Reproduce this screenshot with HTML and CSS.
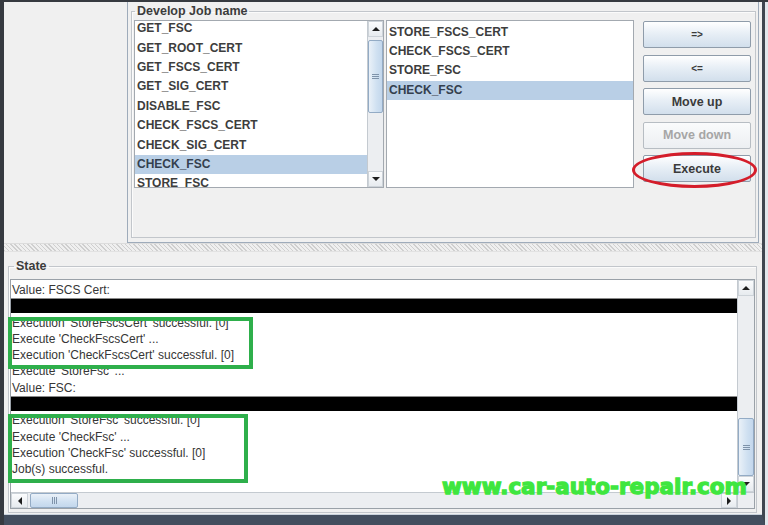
FILE: index.html
```html
<!DOCTYPE html>
<html>
<head>
<meta charset="utf-8">
<link rel="stylesheet" href="styles.css">
</head>
<body>
<div class="win">
  <div class="frame">
    <div class="content">
      <div class="top">
        <div class="jobpanel">
          <fieldset class="group jobgroup">
            <legend>Develop Job name</legend>
            <div class="jobrow">
              <div class="list list-a">
                <div class="list-view">
                  <ul class="items shifted">
                    <li>GET_FSC</li>
                    <li>GET_ROOT_CERT</li>
                    <li>GET_FSCS_CERT</li>
                    <li>GET_SIG_CERT</li>
                    <li>DISABLE_FSC</li>
                    <li>CHECK_FSCS_CERT</li>
                    <li>CHECK_SIG_CERT</li>
                    <li class="sel">CHECK_FSC</li>
                    <li>STORE_FSC</li>
                  </ul>
                </div>
                <div class="vsb">
                  <div class="sb-btn"><span class="tri up"></span></div>
                  <div class="sb-track"><div class="sb-thumb thumb-a"><span class="grip-h"></span></div></div>
                  <div class="sb-btn"><span class="tri down"></span></div>
                </div>
              </div>
              <div class="list list-b">
                <div class="list-view">
                  <ul class="items lowered">
                    <li>STORE_FSCS_CERT</li>
                    <li>CHECK_FSCS_CERT</li>
                    <li>STORE_FSC</li>
                    <li class="sel">CHECK_FSC</li>
                  </ul>
                </div>
              </div>
              <div class="buttons">
                <button class="btn small">=&gt;</button>
                <button class="btn small">&lt;=</button>
                <button class="btn">Move up</button>
                <button class="btn disabled">Move down</button>
                <div class="exec-wrap">
                  <button class="btn exec">Execute</button>
                  <span class="ring"></span>
                </div>
              </div>
            </div>
          </fieldset>
        </div>
      </div>
      <div class="splitter"></div>
      <div class="bottom">
        <fieldset class="group stategroup">
          <legend>State</legend>
          <div class="pane-wrap">
            <div class="pane">
              <div class="viewport">
                <div class="ln">Value: FSCS Cert:</div>
                <div class="ln redact"></div>
                <div class="ln">Execution 'StoreFscsCert' successful. [0]</div>
                <div class="ln">Execute 'CheckFscsCert' ...</div>
                <div class="ln">Execution 'CheckFscsCert' successful. [0]</div>
                <div class="ln">Execute 'StoreFsc' ...</div>
                <div class="ln">Value: FSC:</div>
                <div class="ln redact"></div>
                <div class="ln">Execution 'StoreFsc' successful. [0]</div>
                <div class="ln">Execute 'CheckFsc' ...</div>
                <div class="ln">Execution 'CheckFsc' successful. [0]</div>
                <div class="ln">Job(s) successful.</div>
              </div>
              <div class="vsb pane-vsb">
                <div class="sb-btn"><span class="tri up"></span></div>
                <div class="sb-track"><div class="sb-thumb thumb-b"><span class="grip-h"></span></div></div>
                <div class="sb-btn"><span class="tri down"></span></div>
              </div>
              <div class="hsb">
                <div class="sb-btn hbtn-l"><span class="tri left"></span></div>
                <div class="sb-track htrack"><div class="sb-thumb thumb-h"><span class="grip-v"></span></div></div>
                <div class="sb-btn hbtn-r"><span class="tri right"></span></div>
              </div>
              <div class="corner"></div>
            </div>
            <span class="hl hl1"></span>
            <span class="hl hl2"></span>
          </div>
        </fieldset>
      </div>
    </div>
  </div>
  <div class="watermark">www.car-auto-repair.com</div>
</div>
</body>
</html>
```
FILE: styles.css
```css
* { box-sizing: border-box; }
html, body { margin: 0; padding: 0; }
body { width: 768px; height: 525px; overflow: hidden; background: #e4e8ec; font-family: "Liberation Sans", Arial, sans-serif; }

.win {
  position: relative;
  width: 768px;
  height: 525px;
  overflow: hidden;
  border-top: 2px solid #363a40;
  border-left: 4px solid #363a40;
  padding-right: 3px;
  background: #e2e7ec;
}
.frame {
  height: 100%;
  border-right: 3px solid #3f4650;
  border-bottom: 10px solid #434e5e;
  background: #f0f0f0;
}
.content {
  height: 100%;
  display: flex;
  flex-direction: column;
  border-bottom: 1px solid #c9d2dc;
}

/* top area */
.top { height: 241px; flex: none; display: flex; }
.jobpanel {
  margin-left: 123px;
  margin-right: 3px;
  flex: 1;
  height: 241px;
  border: 1px solid #9eabba;
  border-top: none;
  display: flex;
}
.group {
  margin: 0;
  min-width: 0;
  border: 1px solid #c2c6cb;
  box-shadow: inset 1px 1px 0 #fbfbfb;
}
.group legend {
  font-weight: bold;
  font-size: 12.5px;
  line-height: 18px;
  color: #3c3c3c;
  padding: 0 2px;
}
.jobgroup {
  flex: 1;
  margin: 0 2px 4px 3px;
  padding: 0 2px 0 2px;
}
.jobgroup legend { margin-left: 1px; }

.jobrow { display: flex; height: 168px; }
.list {
  display: flex;
  background: #fff;
  border: 1px solid #a3a9b0;
  overflow: hidden;
}
.list-a { width: 250px; margin-right: 2px; }
.list-b { width: 248px; margin-right: 9px; }
.list-view { flex: 1; overflow: hidden; }
.items { list-style: none; margin: 0; padding: 0; }
.items.shifted { margin-top: -1.8px; }
.items.lowered { margin-top: 1.5px; }
.items li {
  height: 19.4px;
  line-height: 19.4px;
  padding-left: 2px;
  font-weight: bold;
  font-size: 12px;
  color: #3d3d3d;
  white-space: nowrap;
}
.items li.sel { background: #b9cfe6; color: #34404e; }

/* scrollbars */
.vsb {
  width: 16px;
  flex: none;
  display: flex;
  flex-direction: column;
  background: #eceef1;
  border-left: 1px solid #c4cad0;
}
.sb-btn {
  height: 16px;
  flex: none;
  display: flex;
  align-items: center;
  justify-content: center;
  background: linear-gradient(#fbfcfd, #e7ebef);
  border: 1px solid #cdd3d9;
}
.sb-track { flex: 1; display: flex; flex-direction: column; }
.sb-thumb {
  display: flex;
  align-items: center;
  justify-content: center;
  background: linear-gradient(90deg, #eaf1f8, #cfe0f1 60%, #c3d7ec);
  border: 1px solid #93abc5;
  border-radius: 2px;
}
.thumb-a { margin-top: 3px; height: 73px; }
.thumb-b { margin-top: 122px; height: 58px; }
.grip-h {
  width: 7px;
  height: 5px;
  border-top: 1px solid #7f93aa;
  border-bottom: 1px solid #7f93aa;
  position: relative;
}
.grip-h::after {
  content: "";
  position: absolute;
  left: 0; right: 0; top: 1px;
  border-top: 1px solid #7f93aa;
}
.tri { width: 0; height: 0; display: block; }
.tri.up { border-left: 4px solid transparent; border-right: 4px solid transparent; border-bottom: 4px solid #1e1e1e; }
.tri.down { border-left: 4px solid transparent; border-right: 4px solid transparent; border-top: 4px solid #1e1e1e; }
.tri.left { border-top: 4px solid transparent; border-bottom: 4px solid transparent; border-right: 4px solid #1e1e1e; }
.tri.right { border-top: 4px solid transparent; border-bottom: 4px solid transparent; border-left: 4px solid #1e1e1e; }

/* buttons */
.buttons {
  width: 108px;
  display: flex;
  flex-direction: column;
  gap: 6.6px;
  padding-top: 1px;
}
.btn {
  height: 27px;
  width: 100%;
  margin: 0;
  padding: 0;
  font-family: "Liberation Sans", Arial, sans-serif;
  font-weight: bold;
  font-size: 12.5px;
  color: #3b3b3b;
  border: 1px solid #8f9caa;
  border-radius: 2px;
  background: linear-gradient(#ffffff, #e8eff6 45%, #d2dfec);
}
.btn.small { font-size: 10px; }
.btn.disabled {
  color: #a6a6a6;
  border-color: #b7bdc3;
  background: linear-gradient(#fafbfc, #eceff2);
}
.exec-wrap { position: relative; height: 27px; }
.ring {
  position: absolute;
  left: -11px;
  top: -3px;
  width: 125px;
  height: 36px;
  border: 3.5px solid #d41d2a;
  border-radius: 50%;
}

/* splitter */
.splitter {
  height: 9px;
  flex: none;
  border-top: 1px solid #dcdcdc;
  border-bottom: 1px solid #e2e2e2;
  background-color: #efefef;
  background-image: repeating-linear-gradient(45deg, #cfcfcf 0 1px, transparent 1px 3px);
}

/* bottom */
.bottom {
  flex: 1;
  display: flex;
  padding: 5px 5px 0 4px;
}
.stategroup {
  flex: 1;
  height: 256px;
  padding: 4px 1px 0 1px;
}
.stategroup legend { margin-left: 4px; }
.pane-wrap { position: relative; }
.pane {
  height: 230px;
  display: grid;
  grid-template-columns: 1fr 17px;
  grid-template-rows: 1fr 16px;
  border: 1px solid #9aa1a8;
  background: #fff;
}
.viewport { overflow: hidden; background: #fff; padding-top: 2px; }
.ln {
  height: 16.3px;
  line-height: 16.3px;
  padding-left: 1px;
  font-size: 12px;
  color: #363636;
  white-space: nowrap;
}
.ln.redact {
  background: linear-gradient(to bottom, #8a8a8a 0 1px, #000 1px 15px, #fff 15px);
}
.pane-vsb { width: 17px; }
.hsb {
  display: flex;
  background: #eceef1;
  border-top: 1px solid #c4cad0;
}
.hbtn-l { width: 17px; height: auto; }
.hbtn-r { width: 16px; height: auto; }
.htrack { flex-direction: row; align-items: stretch; }
.thumb-h {
  margin-left: 2px;
  width: 48px;
  background: linear-gradient(#eaf1f8, #cfe0f1 60%, #c3d7ec);
}
.grip-v {
  width: 5px;
  height: 7px;
  border-left: 1px solid #7f93aa;
  border-right: 1px solid #7f93aa;
  position: relative;
}
.grip-v::after {
  content: "";
  position: absolute;
  top: 0; bottom: 0; left: 1px;
  border-left: 1px solid #7f93aa;
}
.corner { background: #eceef1; border-top: 1px solid #c4cad0; border-left: 1px solid #c4cad0; }

.hl {
  position: absolute;
  border: 4px solid #2eaf4b;
}
.hl1 { left: -2px; top: 38px; width: 245px; height: 52px; }
.hl2 { left: -2px; top: 135px; width: 240px; height: 69px; }

.watermark {
  position: absolute;
  left: 438px;
  top: 472px;
  font-family: "DejaVu Sans", sans-serif;
  font-weight: bold;
  font-size: 21.5px;
  line-height: 25px;
  color: #3fe63f;
  -webkit-text-stroke: 1.3px #3fe63f;
  white-space: nowrap;
}
```
